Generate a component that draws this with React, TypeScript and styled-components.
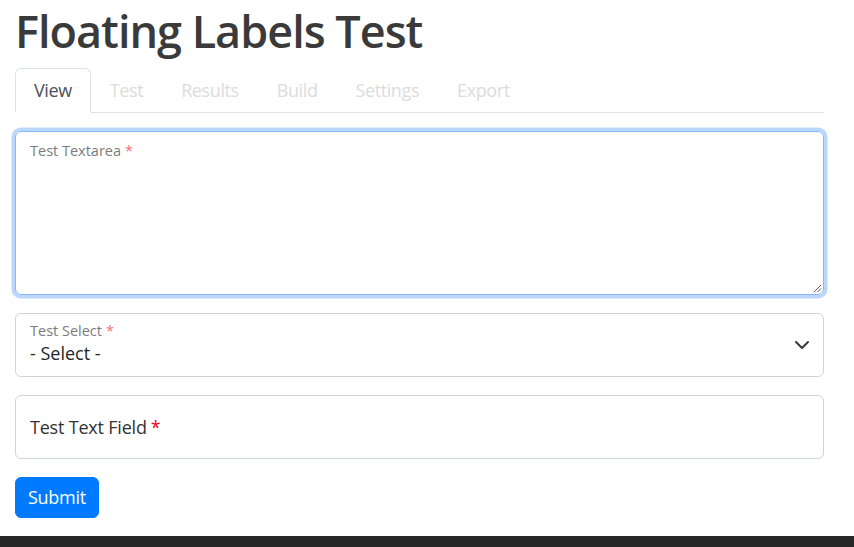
import React from "react";
import styled, { createGlobalStyle } from "styled-components";

const GlobalStyle = createGlobalStyle`
  html, body { margin: 0; padding: 0; background: #fff; }
  body {
    font-family: "Open Sans", "Noto Sans", "DejaVu Sans", sans-serif;
    color: #212529;
    -webkit-font-smoothing: antialiased;
  }
  * { box-sizing: border-box; }
`;

const Page = styled.div`
  min-height: 547px;
  display: flex;
  flex-direction: column;
`;

const Main = styled.main`
  width: 824px;
  padding-left: 15px;
`;

const Title = styled.h1`
  margin: 3px 0 10px 0;
  font-size: 45px;
  line-height: 55px;
  font-weight: 600;
  letter-spacing: -1px;
  color: #3a3a3a;
`;

const Tabs = styled.nav`
  display: flex;
  border-bottom: 1px solid #dee2e6;
`;

const Tab = styled.a<{ $active?: boolean }>`
  display: block;
  padding: 8px 18px;
  margin-bottom: -1px;
  font-size: 18px;
  line-height: 27px;
  letter-spacing: -0.4px;
  border: 1px solid transparent;
  border-top-left-radius: 6px;
  border-top-right-radius: 6px;
  color: ${(p) => (p.$active ? "#495057" : "#dcdcdc")};
  background: ${(p) => (p.$active ? "#fff" : "transparent")};
  border-color: ${(p) => (p.$active ? "#dee2e6 #dee2e6 #fff" : "transparent")};
`;

const Form = styled.form`
  margin-top: 18px;
  display: flex;
  flex-direction: column;
  gap: 18px;
`;

const TextAreaBox = styled.div`
  position: relative;
  height: 164px;
  border: 1px solid #86b7fe;
  border-radius: 6px;
  box-shadow: 0 0 0 3.5px rgba(13, 110, 253, 0.28);
  padding: 7px 14px;
`;

const FieldBox = styled.div<{ $center?: boolean }>`
  height: 64px;
  border: 1px solid #ced4da;
  border-radius: 6px;
  padding: ${(p) => (p.$center ? "0 14px" : "8px 13px 0 14px")};
  display: flex;
  align-items: center;
  justify-content: space-between;
`;

const Stack = styled.div`
  display: flex;
  flex-direction: column;
  align-self: flex-start;
`;

const FloatLabel = styled.span<{ $tight?: boolean }>`
  font-size: 14.5px;
  line-height: ${(p) => (p.$tight ? "18px" : "20px")};
  color: #7b7b7b;
`;

const Star = styled.span<{ $soft?: boolean }>`
  color: ${(p) => (p.$soft ? "#f0707c" : "#e8001c")};
  margin-left: 4px;
`;

const Value = styled.span`
  font-size: 18px;
  line-height: 27px;
  color: #212529;
`;

const PlainLabel = styled.span`
  font-size: 18px;
  line-height: 27px;
  letter-spacing: -0.2px;
  color: #333;
`;

const Resize = styled.svg`
  position: absolute;
  right: 1px;
  bottom: 1px;
`;

const Chevron = styled.svg`
  flex: none;
  margin-top: -8px;
`;

const SubmitButton = styled.button`
  align-self: flex-start;
  margin-bottom: 18px;
  padding: 6px 12px;
  font-family: inherit;
  font-size: 18px;
  line-height: 27px;
  letter-spacing: -0.3px;
  color: #fff;
  background: #007bff;
  border: 1px solid #007bff;
  border-radius: 6px;
`;

const Footer = styled.footer`
  height: 11px;
  background: #262626;
`;

export default function App() {
  const tabs = ["View", "Test", "Results", "Build", "Settings", "Export"];
  return (
    <Page>
      <GlobalStyle />
      <Main>
        <Title>Floating Labels Test</Title>
        <Tabs>
          {tabs.map((t, i) => (
            <Tab key={t} $active={i === 0}>
              {t}
            </Tab>
          ))}
        </Tabs>
        <Form onSubmit={(e) => e.preventDefault()}>
          <TextAreaBox>
            <FloatLabel>
              Test Textarea<Star $soft>*</Star>
            </FloatLabel>
            <Resize width="10" height="10" viewBox="0 0 10 10">
              <path d="M9 2 L2 9 M9 5.5 L5.5 9" stroke="#555" strokeWidth="1" fill="none" />
            </Resize>
          </TextAreaBox>
          <FieldBox>
            <Stack>
              <FloatLabel $tight>
                Test Select<Star $soft>*</Star>
              </FloatLabel>
              <Value>- Select -</Value>
            </Stack>
            <Chevron width="16" height="16" viewBox="0 0 16 16">
              <path d="M2 5l6 6 6-6" stroke="#343a40" strokeWidth="2" fill="none" strokeLinecap="round" strokeLinejoin="round" />
            </Chevron>
          </FieldBox>
          <FieldBox $center>
            <PlainLabel>
              Test Text Field<Star>*</Star>
            </PlainLabel>
          </FieldBox>
          <SubmitButton type="submit">Submit</SubmitButton>
        </Form>
      </Main>
      <Footer />
    </Page>
  );
}
